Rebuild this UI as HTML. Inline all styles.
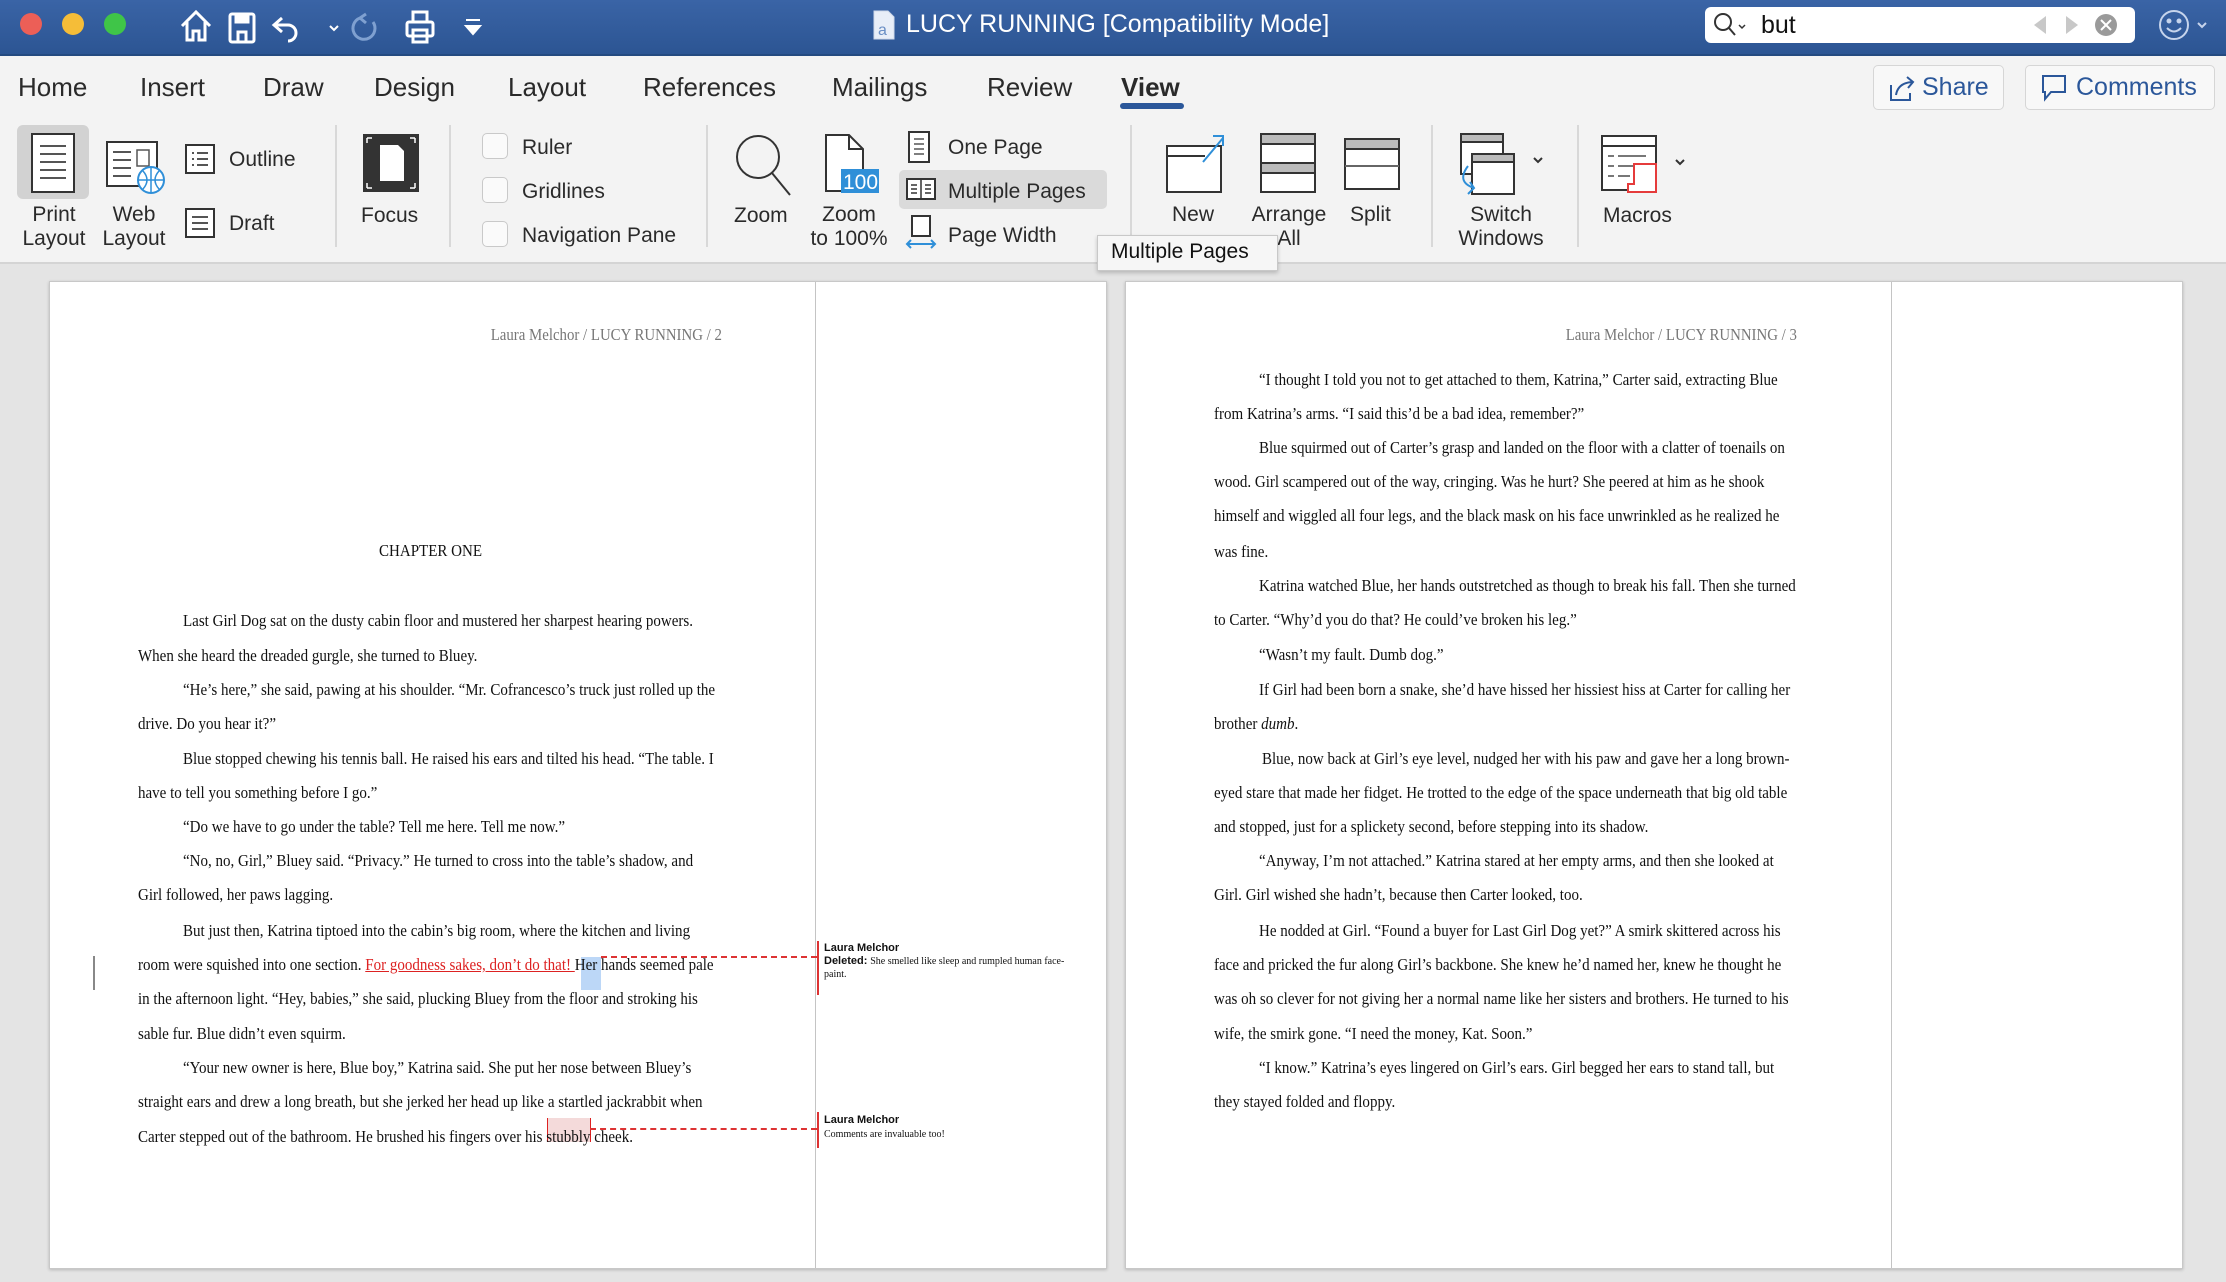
<!DOCTYPE html>
<html><head><meta charset="utf-8"><style>
*{margin:0;padding:0;box-sizing:border-box}
body{width:2226px;height:1282px;overflow:hidden;background:#e4e4e4;font-family:"Liberation Sans",sans-serif;position:relative}
.abs{position:absolute}
#title{left:0;top:0;width:2226px;height:56px;background:linear-gradient(#3a64a6,#2c5593);border-bottom:2px solid #244a80}
#ribbon{left:0;top:56px;width:2226px;height:208px;background:#f3f3f3;border-bottom:2px solid #d4d4d4}
.tab{position:absolute;top:72px;font-size:26px;color:#2a2a2a}
.lbl{position:absolute;font-size:21px;color:#2a2a2a;text-align:center;line-height:24px;white-space:nowrap}
.sep{position:absolute;top:125px;width:2px;height:122px;background:#d8d8d8}
.cb{position:absolute;left:482px;width:26px;height:26px;border:1.5px solid #c9c9c9;border-radius:5px;background:#fafafa}
.page{position:absolute;top:281px;height:988px;background:#fff;border:1px solid #c8c8c8;box-shadow:0 1px 3px rgba(0,0,0,.2)}
.ln{position:absolute;font-family:"Liberation Serif",serif;font-size:16.5px;line-height:20px;white-space:nowrap;color:#111;transform:scaleX(.91);transform-origin:0 0}
.hd{position:absolute;font-family:"Liberation Serif",serif;font-size:16.5px;color:#777;white-space:nowrap;transform:scaleX(.9);transform-origin:100% 0}
.cm{position:absolute;font-size:11px;white-space:nowrap;color:#111}
</style></head><body>
<div id="title" class="abs"></div>
<div class="abs" style="left:20px;top:13px;width:22px;height:22px;border-radius:50%;background:#ec5f57"></div>
<div class="abs" style="left:62px;top:13px;width:22px;height:22px;border-radius:50%;background:#f5bd38"></div>
<div class="abs" style="left:104px;top:13px;width:22px;height:22px;border-radius:50%;background:#3fc548"></div>
<svg class="abs" style="left:178px;top:6px" width="320" height="40" viewBox="0 0 320 40" fill="none" stroke="#fff" stroke-width="3">
<path d="M4 20 L18 6 L32 20 M9 16 V34 H15 V25 H21 V34 H27 V16"/>
<rect x="52" y="8" width="24" height="28" rx="2"/><rect x="58" y="8" width="12" height="8" fill="#fff"/><rect x="60" y="26" width="8" height="10"/>
<path d="M104 12 L96 19 L104 26 M96 19 H110 A8 8 0 0 1 110 35"/><path d="M152 20 l4 4 l4 -4" stroke-width="2"/>
<path d="M182 12 A11 11 0 1 0 195 16 M188 8 L182 12 L188 17" stroke="#7fa0d0"/>
<rect x="235" y="6" width="14" height="10"/><rect x="229" y="16" width="26" height="14" rx="2"/><rect x="235" y="24" width="14" height="12"/>
<path d="M288 14 H302 M288 20 L295 28 L302 20 Z" fill="#fff" stroke-width="2"/>
</svg>
<svg class="abs" style="left:872px;top:9px" width="24" height="32"><path d="M2 2 H16 L22 8 V30 H2 Z" fill="#e8eef8" stroke="#cfd9ea"/><text x="6" y="26" font-size="16" fill="#6a8fc5" font-family="Liberation Sans">a</text></svg>
<div class="abs" style="left:906px;top:10px;font-size:25px;color:#fff">LUCY RUNNING [Compatibility Mode]</div>
<div class="abs" style="left:1705px;top:7px;width:430px;height:36px;background:#fff;border-radius:6px"></div>
<svg class="abs" style="left:1712px;top:11px" width="410" height="28"><circle cx="11" cy="11" r="8" fill="none" stroke="#333" stroke-width="2"/><path d="M17 17 L23 24" stroke="#333" stroke-width="2"/><path d="M27 14 l3 3 l3 -3" stroke="#333" fill="none" stroke-width="1.5"/>
<path d="M322 14 L334 5 V23 Z" fill="#c8c8c8"/><path d="M354 5 L366 14 L354 23 Z" fill="#c8c8c8"/><circle cx="394" cy="14" r="11" fill="#9a9a9a"/><path d="M389 9 L399 19 M399 9 L389 19" stroke="#fff" stroke-width="2"/></svg>
<div class="abs" style="left:1761px;top:11px;font-size:25px;color:#111">but</div>
<svg class="abs" style="left:2158px;top:8px" width="60" height="36" fill="none" stroke="#c6d4ec" stroke-width="2"><circle cx="16" cy="17" r="14"/><circle cx="11" cy="13" r="1.5" fill="#c6d4ec"/><circle cx="21" cy="13" r="1.5" fill="#c6d4ec"/><path d="M9 20 Q16 27 23 20"/><path d="M40 15 l4 4 l4 -4"/></svg>

<div id="ribbon" class="abs"></div>
<div class="tab" style="left:18px">Home</div><div class="tab" style="left:140px">Insert</div><div class="tab" style="left:263px">Draw</div><div class="tab" style="left:374px">Design</div><div class="tab" style="left:508px">Layout</div><div class="tab" style="left:643px">References</div><div class="tab" style="left:832px">Mailings</div><div class="tab" style="left:987px">Review</div><div class="tab" style="left:1121px;font-weight:bold;font-size:26px">View</div>
<div class="abs" style="left:1120px;top:103px;width:64px;height:6px;border-radius:3px;background:#2b579a"></div>
<div class="abs" style="left:1873px;top:65px;width:131px;height:45px;border:1.5px solid #d6d6d6;border-radius:5px;background:#f8f8f8"></div>
<svg class="abs" style="left:1888px;top:73px" width="30" height="30" fill="none" stroke="#2b579a" stroke-width="2"><path d="M3 12 V27 H22 V20"/><path d="M8 22 Q10 10 24 9 M19 4 L25 9 L20 15"/></svg>
<div class="abs" style="left:1922px;top:73px;font-size:25px;color:#2b579a">Share</div>
<div class="abs" style="left:2025px;top:65px;width:190px;height:45px;border:1.5px solid #d6d6d6;border-radius:5px;background:#f8f8f8"></div>
<svg class="abs" style="left:2040px;top:73px" width="28" height="30" fill="none" stroke="#2b579a" stroke-width="2"><path d="M3 3 H25 V19 H11 L5 26 V19 H3 Z"/></svg>
<div class="abs" style="left:2076px;top:73px;font-size:25px;color:#2b579a">Comments</div>

<div class="abs" style="left:17px;top:125px;width:72px;height:74px;background:#d2d2d2;border-radius:6px"></div>
<svg class="abs" style="left:30px;top:132px" width="46" height="62"><rect x="2" y="2" width="42" height="58" fill="#fff" stroke="#333" stroke-width="2"/><path d="M10 14 H36 M10 22 H36 M10 30 H36 M10 38 H36 M10 46 H36" stroke="#555" stroke-width="2"/></svg>
<div class="lbl" style="left:14px;top:203px;width:80px">Print<br>Layout</div>
<svg class="abs" style="left:105px;top:140px" width="62" height="56"><rect x="2" y="2" width="50" height="44" fill="#fff" stroke="#333" stroke-width="2"/><path d="M8 12 H26 M8 20 H26 M8 28 H26 M8 36 H26" stroke="#555" stroke-width="2"/><rect x="32" y="10" width="12" height="16" fill="none" stroke="#555" stroke-width="1.5"/><circle cx="46" cy="40" r="13" fill="#fff" stroke="#2f8fd8" stroke-width="2"/><path d="M33 40 H59 M46 27 V53 M38 31 Q46 40 38 49 M54 31 Q46 40 54 49" stroke="#2f8fd8" stroke-width="1.5" fill="none"/></svg>
<div class="lbl" style="left:98px;top:203px;width:72px">Web<br>Layout</div>
<svg class="abs" style="left:184px;top:143px" width="32" height="32"><rect x="2" y="2" width="28" height="28" fill="#fff" stroke="#333" stroke-width="2"/><path d="M8 10 H10 M13 10 H24 M8 16 H10 M13 16 H24 M8 22 H10 M13 22 H24" stroke="#555" stroke-width="2"/></svg>
<div class="lbl" style="left:229px;top:148px">Outline</div>
<svg class="abs" style="left:184px;top:207px" width="32" height="32"><rect x="2" y="2" width="28" height="28" fill="#fff" stroke="#333" stroke-width="2"/><path d="M8 10 H24 M8 16 H24 M8 22 H24" stroke="#555" stroke-width="2"/></svg>
<div class="lbl" style="left:229px;top:212px">Draft</div>
<div class="sep" style="left:335px"></div>
<svg class="abs" style="left:362px;top:133px" width="58" height="60"><rect x="1" y="1" width="56" height="58" fill="#333"/><path d="M18 12 H36 L42 18 V48 H18 Z" fill="#fff"/><path d="M5 5 H10 M5 5 V10 M53 5 H48 M53 5 V10 M5 55 H10 M5 55 V50 M53 55 H48 M53 55 V50" stroke="#fff" stroke-width="1.5"/></svg>
<div class="lbl" style="left:361px;top:204px">Focus</div>
<div class="sep" style="left:449px"></div>
<div class="cb" style="top:133px"></div><div class="lbl" style="left:522px;top:136px">Ruler</div>
<div class="cb" style="top:177px"></div><div class="lbl" style="left:522px;top:180px">Gridlines</div>
<div class="cb" style="top:221px"></div><div class="lbl" style="left:522px;top:224px">Navigation Pane</div>
<div class="sep" style="left:706px"></div>
<svg class="abs" style="left:734px;top:133px" width="60" height="64" fill="none" stroke="#333" stroke-width="2"><circle cx="24" cy="24" r="21"/><path d="M38 40 L56 62"/></svg>
<div class="lbl" style="left:734px;top:204px">Zoom</div>
<svg class="abs" style="left:823px;top:133px" width="60" height="64"><path d="M3 2 H26 L40 16 V58 H3 Z" fill="#fff" stroke="#333" stroke-width="2"/><path d="M26 2 V16 H40" fill="none" stroke="#333" stroke-width="2"/><rect x="18" y="36" width="38" height="24" fill="#2f8fd8"/><text x="20" y="56" font-size="21" fill="#fff" font-family="Liberation Sans">100</text></svg>
<div class="lbl" style="left:806px;top:203px;width:86px">Zoom<br>to 100%</div>
<svg class="abs" style="left:907px;top:130px" width="24" height="34"><rect x="2" y="2" width="20" height="30" fill="#fff" stroke="#333" stroke-width="2"/><path d="M7 9 H17 M7 14 H17 M7 19 H17 M7 24 H17" stroke="#555" stroke-width="1.5"/></svg>
<div class="lbl" style="left:948px;top:136px">One Page</div>
<div class="abs" style="left:899px;top:170px;width:208px;height:39px;background:#dadada;border-radius:5px"></div>
<svg class="abs" style="left:905px;top:177px" width="32" height="24"><rect x="2" y="2" width="28" height="20" fill="#fff" stroke="#333" stroke-width="2"/><path d="M16 2 V22 M6 8 H12 M6 12 H12 M6 16 H12 M20 8 H26 M20 12 H26 M20 16 H26" stroke="#333" stroke-width="1.5"/></svg>
<div class="lbl" style="left:948px;top:180px">Multiple Pages</div>
<svg class="abs" style="left:905px;top:214px" width="34" height="36"><rect x="7" y="2" width="18" height="20" fill="#fff" stroke="#333" stroke-width="2"/><path d="M2 30 H30 M6 26 L2 30 L6 34 M26 26 L30 30 L26 34" stroke="#2f8fd8" stroke-width="2" fill="none"/></svg>
<div class="lbl" style="left:948px;top:224px">Page Width</div>
<div class="sep" style="left:1130px"></div>
<svg class="abs" style="left:1165px;top:132px" width="62" height="62"><rect x="2" y="14" width="54" height="46" fill="#fff" stroke="#333" stroke-width="2"/><path d="M2 24 H40" stroke="#333" stroke-width="2"/><path d="M38 30 L58 6 M48 4 H58 V14" stroke="#2f8fd8" stroke-width="2" fill="none"/></svg>
<div class="lbl" style="left:1172px;top:203px">New</div>
<svg class="abs" style="left:1260px;top:133px" width="56" height="60"><rect x="1" y="1" width="54" height="58" fill="#fff" stroke="#333" stroke-width="2"/><rect x="1" y="1" width="54" height="10" fill="#bbb" stroke="#333" stroke-width="2"/><rect x="1" y="30" width="54" height="10" fill="#bbb" stroke="#333" stroke-width="2"/></svg>
<div class="lbl" style="left:1249px;top:203px;width:80px">Arrange<br>All</div>
<svg class="abs" style="left:1344px;top:138px" width="56" height="52"><rect x="1" y="1" width="54" height="50" fill="#fff" stroke="#333" stroke-width="2"/><rect x="1" y="1" width="54" height="10" fill="#bbb" stroke="#333" stroke-width="2"/><path d="M1 28 H55" stroke="#666" stroke-width="2"/></svg>
<div class="lbl" style="left:1350px;top:203px">Split</div>
<div class="sep" style="left:1431px"></div>
<svg class="abs" style="left:1458px;top:132px" width="90" height="66"><rect x="3" y="2" width="42" height="40" fill="#fff" stroke="#333" stroke-width="2"/><rect x="3" y="2" width="42" height="8" fill="#bbb" stroke="#333" stroke-width="2"/><rect x="14" y="22" width="42" height="40" fill="#fff" stroke="#333" stroke-width="2"/><rect x="14" y="22" width="42" height="8" fill="#bbb" stroke="#333" stroke-width="2"/><path d="M10 34 Q-2 50 16 56 M12 50 L16 56 L10 62" stroke="#2f8fd8" stroke-width="2" fill="none"/><path d="M76 26 l4 4 l4 -4" stroke="#333" stroke-width="2" fill="none"/></svg>
<div class="lbl" style="left:1448px;top:203px;width:106px">Switch<br>Windows</div>
<div class="sep" style="left:1577px"></div>
<svg class="abs" style="left:1600px;top:134px" width="90" height="64"><rect x="2" y="2" width="54" height="54" fill="#fff" stroke="#333" stroke-width="2"/><path d="M2 12 H56" stroke="#333" stroke-width="2"/><path d="M8 22 H14 M18 22 H46 M8 32 H14 M18 32 H38 M8 42 H14 M18 42 H30" stroke="#777" stroke-width="2"/><path d="M34 30 H56 V58 H28 V50 H34 Z" fill="#fff" stroke="#e53b3b" stroke-width="2"/><path d="M76 26 l4 4 l4 -4" stroke="#333" stroke-width="2" fill="none"/></svg>
<div class="lbl" style="left:1603px;top:204px">Macros</div>

<div class="page" style="left:49px;width:1058px"><div class="abs" style="left:765px;top:0;width:1px;height:986px;background:#c4c4c4"></div></div>
<div class="page" style="left:1125px;width:1058px"><div class="abs" style="left:765px;top:0;width:1px;height:986px;background:#c4c4c4"></div></div>
<div class="abs" style="left:1097px;top:235px;width:181px;height:36px;background:#f6f6f6;border:1px solid #c8c8c8;box-shadow:0 2px 4px rgba(0,0,0,.2);font-size:21px;color:#111;padding:4px 0 0 13px">Multiple Pages</div>

<div class="hd" style="right:1504px;top:325px">Laura Melchor / LUCY RUNNING / 2</div>
<div class="ln" style="left:379px;top:541px">CHAPTER ONE</div>
<div class="abs" style="left:581px;top:957px;width:20px;height:33px;background:#bcd7f7"></div>
<div class="abs" style="left:547px;top:1118px;width:44px;height:24px;background:#f4dada;border-left:1.5px solid #d22;border-right:1.5px solid #d22"></div>
<div class="abs" style="left:93px;top:956px;width:1.5px;height:34px;background:#888"></div>
<div class="ln" style="left:183px;top:611px">Last Girl Dog sat on the dusty cabin floor and mustered her sharpest hearing powers.</div>
<div class="ln" style="left:138px;top:646px">When she heard the dreaded gurgle, she turned to Bluey.</div>
<div class="ln" style="left:183px;top:680px">“He’s here,” she said, pawing at his shoulder. “Mr. Cofrancesco’s truck just rolled up the</div>
<div class="ln" style="left:138px;top:714px">drive. Do you hear it?”</div>
<div class="ln" style="left:183px;top:749px">Blue stopped chewing his tennis ball. He raised his ears and tilted his head. “The table. I</div>
<div class="ln" style="left:138px;top:783px">have to tell you something before I go.”</div>
<div class="ln" style="left:183px;top:817px">“Do we have to go under the table? Tell me here. Tell me now.”</div>
<div class="ln" style="left:183px;top:851px">“No, no, Girl,” Bluey said. “Privacy.” He turned to cross into the table’s shadow, and</div>
<div class="ln" style="left:138px;top:885px">Girl followed, her paws lagging.</div>
<div class="ln" style="left:183px;top:921px">But just then, Katrina tiptoed into the cabin’s big room, where the kitchen and living</div>
<div class="ln" style="left:138px;top:955px">room were squished into one section. <span style="color:#d22;text-decoration:underline">For goodness sakes, don’t do that! </span>Her hands seemed pale</div>
<div class="ln" style="left:138px;top:989px">in the afternoon light. “Hey, babies,” she said, plucking Bluey from the floor and stroking his</div>
<div class="ln" style="left:138px;top:1024px">sable fur. Blue didn’t even squirm.</div>
<div class="ln" style="left:183px;top:1058px">“Your new owner is here, Blue boy,” Katrina said. She put her nose between Bluey’s</div>
<div class="ln" style="left:138px;top:1092px">straight ears and drew a long breath, but she jerked her head up like a startled jackrabbit when</div>
<div class="ln" style="left:138px;top:1127px">Carter stepped out of the bathroom. He brushed his fingers over his stubbly cheek.</div>
<div class="abs" style="left:601px;top:956px;width:216px;border-top:2px dashed #d33"></div>
<div class="abs" style="left:817px;top:941px;width:2px;height:54px;background:#d33"></div>
<div class="cm" style="left:824px;top:942px;font-weight:bold">Laura Melchor</div>
<div class="cm" style="left:824px;top:955px;font-size:10px"><b style="font-size:11px">Deleted:</b> <span style="font-family:'Liberation Serif',serif">She smelled like sleep and rumpled human face-</span></div>
<div class="cm" style="left:824px;top:969px;font-family:'Liberation Serif',serif;font-size:10px">paint.</div>
<div class="abs" style="left:590px;top:1128px;width:227px;border-top:2px dashed #d33"></div>
<div class="abs" style="left:817px;top:1112px;width:2px;height:36px;background:#d33"></div>
<div class="cm" style="left:824px;top:1114px;font-weight:bold">Laura Melchor</div>
<div class="cm" style="left:824px;top:1129px;font-family:'Liberation Serif',serif;font-size:10px">Comments are invaluable too!</div>

<div class="hd" style="right:429px;top:325px">Laura Melchor / LUCY RUNNING / 3</div>
<div class="ln" style="left:1259px;top:370px">“I thought I told you not to get attached to them, Katrina,” Carter said, extracting Blue</div>
<div class="ln" style="left:1214px;top:404px">from Katrina’s arms. “I said this’d be a bad idea, remember?”</div>
<div class="ln" style="left:1259px;top:438px">Blue squirmed out of Carter’s grasp and landed on the floor with a clatter of toenails on</div>
<div class="ln" style="left:1214px;top:472px">wood. Girl scampered out of the way, cringing. Was he hurt? She peered at him as he shook</div>
<div class="ln" style="left:1214px;top:506px">himself and wiggled all four legs, and the black mask on his face unwrinkled as he realized he</div>
<div class="ln" style="left:1214px;top:542px">was fine.</div>
<div class="ln" style="left:1259px;top:576px">Katrina watched Blue, her hands outstretched as though to break his fall. Then she turned</div>
<div class="ln" style="left:1214px;top:610px">to Carter. “Why’d you do that? He could’ve broken his leg.”</div>
<div class="ln" style="left:1259px;top:645px">“Wasn’t my fault. Dumb dog.”</div>
<div class="ln" style="left:1259px;top:680px">If Girl had been born a snake, she’d have hissed her hissiest hiss at Carter for calling her</div>
<div class="ln" style="left:1214px;top:714px">brother <i>dumb</i>.</div>
<div class="ln" style="left:1262px;top:749px">Blue, now back at Girl’s eye level, nudged her with his paw and gave her a long brown-</div>
<div class="ln" style="left:1214px;top:783px">eyed stare that made her fidget. He trotted to the edge of the space underneath that big old table</div>
<div class="ln" style="left:1214px;top:817px">and stopped, just for a splickety second, before stepping into its shadow.</div>
<div class="ln" style="left:1259px;top:851px">“Anyway, I’m not attached.” Katrina stared at her empty arms, and then she looked at</div>
<div class="ln" style="left:1214px;top:885px">Girl. Girl wished she hadn’t, because then Carter looked, too.</div>
<div class="ln" style="left:1259px;top:921px">He nodded at Girl. “Found a buyer for Last Girl Dog yet?” A smirk skittered across his</div>
<div class="ln" style="left:1214px;top:955px">face and pricked the fur along Girl’s backbone. She knew he’d named her, knew he thought he</div>
<div class="ln" style="left:1214px;top:989px">was oh so clever for not giving her a normal name like her sisters and brothers. He turned to his</div>
<div class="ln" style="left:1214px;top:1024px">wife, the smirk gone. “I need the money, Kat. Soon.”</div>
<div class="ln" style="left:1259px;top:1058px">“I know.” Katrina’s eyes lingered on Girl’s ears. Girl begged her ears to stand tall, but</div>
<div class="ln" style="left:1214px;top:1092px">they stayed folded and floppy.</div>
</body></html>
